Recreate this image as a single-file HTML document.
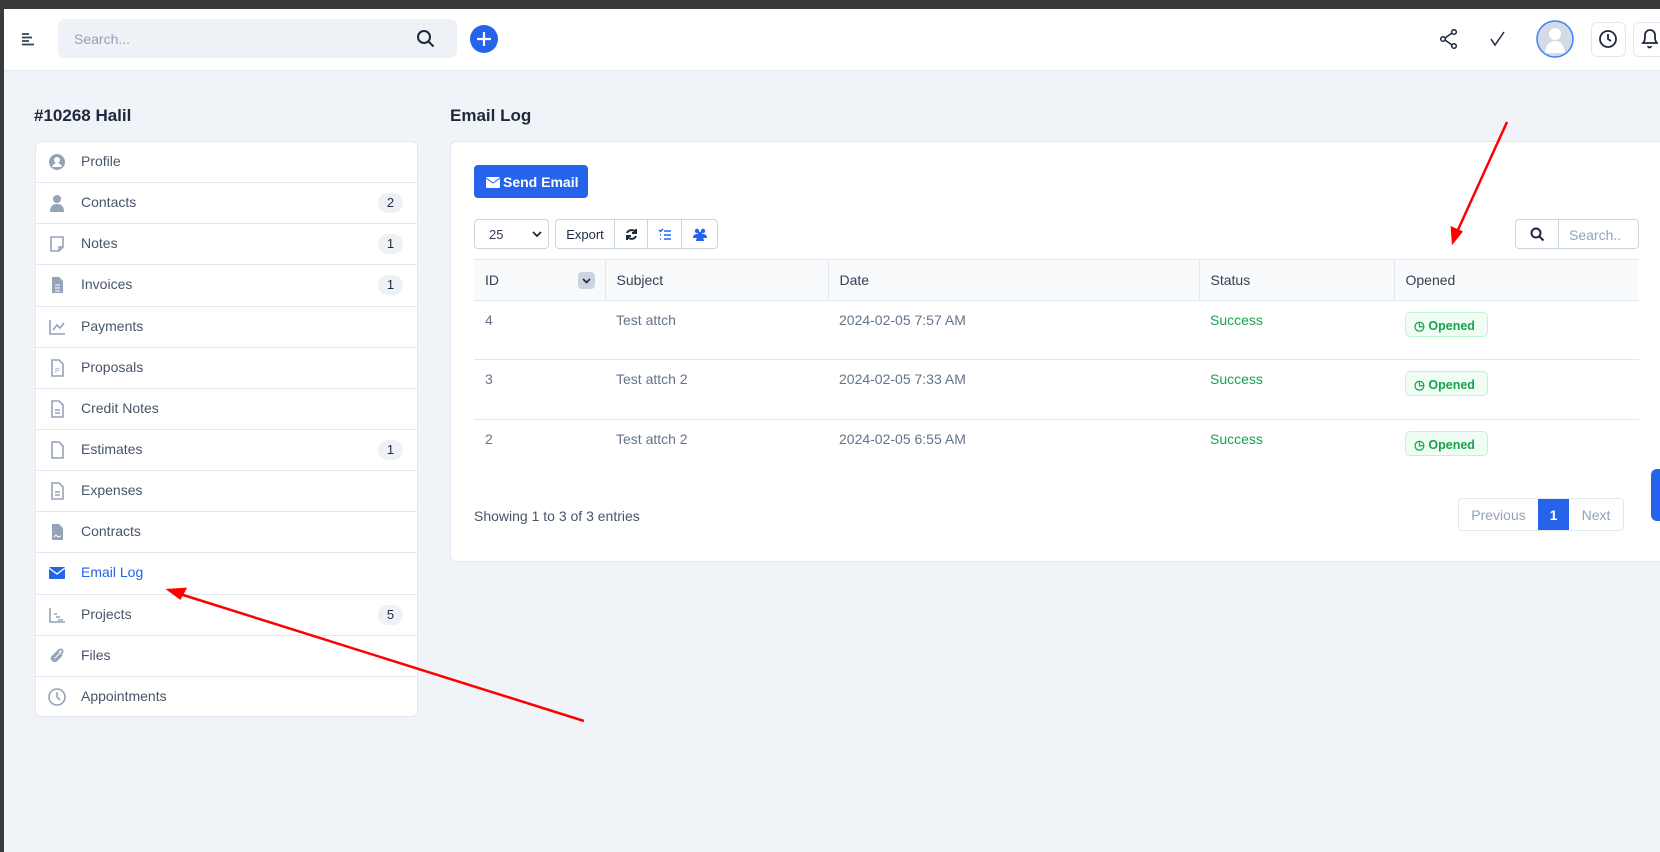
<!DOCTYPE html>
<html><head><meta charset="utf-8"><style>
*{box-sizing:border-box;margin:0;padding:0}
body{width:1660px;height:852px;overflow:hidden;background:#f0f3f8;font-family:"Liberation Sans",Arial,sans-serif;font-size:14px;color:#475569;position:relative}
.abs{position:absolute}
.topbar{left:0;top:0;width:1660px;height:9px;background:#3a3a3a}
.leftbar{left:0;top:0;width:4px;height:852px;background:#3a3a3a}
.header{left:4px;top:9px;width:1656px;height:62px;background:#fff;border-bottom:1px solid #e2e8f0}
.search{left:58px;top:19px;width:399px;height:39px;background:#eef1f6;border-radius:7px;color:#94a3b8;font-size:14px;padding:12px 0 0 16px}
h1{font-size:17px;font-weight:bold;color:#1e293b;position:absolute}
.side{left:35px;top:141px;width:383px;height:576px;background:#fff;border:1px solid #e2e8f0;border-radius:6px;overflow:hidden}
.row{height:41.15px;border-bottom:1px solid #e2e8f0;position:relative;font-size:14px;color:#475569;padding:11px 0 0 45px}
.row:last-child{border-bottom:0}
.row svg{position:absolute;left:12px;top:11px}
.badge{position:absolute;right:14px;top:10px;width:25px;height:20px;border-radius:10px;background:#eef1f6;color:#1e293b;font-size:13px;text-align:center;line-height:20px}
.active{color:#2563eb}
.main{left:450px;top:141px;width:1220px;height:421px;background:#fff;border:1px solid #e2e8f0;border-radius:6px}
.btn{left:474px;top:165px;width:114px;height:33px;background:#2563eb;border-radius:4px;color:#fff;font-weight:bold;font-size:14px;padding:9px 0 0 12px}
.sel{left:474px;top:219px;width:75px;height:30px;border:1px solid #cbd5e1;border-radius:4px;font-size:13px;color:#334155;padding:7px 0 0 14px}
.grp{left:555px;top:219px;height:30px;border:1px solid #cbd5e1;border-radius:4px;display:flex}
.grp div{border-right:1px solid #cbd5e1;height:28px;display:flex;align-items:center;justify-content:center;font-size:13px;color:#1e293b}
.grp div:last-child{border-right:0}
table{position:absolute;left:474px;top:259px;width:1165px;border-collapse:collapse}
th{background:#f8fafc;height:41px;text-align:left;font-weight:normal;color:#334155;font-size:14px;padding-left:11px;border-right:1px solid #e2e8f0;border-top:1px solid #e2e8f0;border-bottom:1px solid #e2e8f0}
th:last-child{border-right:0}
td{height:59.3px;vertical-align:top;padding:11px 0 0 11px;border-bottom:1px solid #e2e8f0;color:#64748b}
tr:last-child td{border-bottom:0}
.ok{color:#16a34a}
.op{display:inline-block;margin-top:0px;height:25px;width:83px;border:1px solid #bbf7d0;background:#f0fdf4;border-radius:5px;color:#16a34a;font-size:12.5px;font-weight:bold;padding:5px 0 0 8px}
.pag{left:1458px;top:498px;height:33px;border:1px solid #e2e8f0;border-radius:4px;display:flex;font-size:14px;color:#94a3b8}
.pag div{display:flex;align-items:center;justify-content:center}
</style></head><body>
<div class="abs header"></div>
<div class="abs topbar"></div>
<div class="abs leftbar"></div>
<svg class="abs" style="left:21px;top:33px" width="14" height="13"><path d="M1 1h7M1 4.5h10M1 8h7M1 11.5h12" stroke="#334155" stroke-width="1.8"/></svg>
<div class="abs search">Search...</div>
<svg class="abs" style="left:416px;top:29px" width="20" height="20" fill="none" stroke="#1e293b" stroke-width="2"><circle cx="8" cy="8" r="6"/><path d="M12.5 12.5l5 5"/></svg>
<svg class="abs" style="left:470px;top:25px" width="28" height="28"><circle cx="14" cy="14" r="14" fill="#2563eb"/><path d="M14 7v14M7 14h14" stroke="#fff" stroke-width="2.2"/></svg>
<svg class="abs" style="left:1439px;top:29px" width="20" height="20" fill="none" stroke="#1e293b" stroke-width="1.5"><circle cx="15" cy="3" r="2.3"/><circle cx="4" cy="10" r="2.3"/><circle cx="15" cy="17" r="2.3"/><path d="M6 9l7-5M6 11l7 5"/></svg>
<svg class="abs" style="left:1489px;top:30px" width="18" height="18" fill="none" stroke="#1e293b" stroke-width="1.5"><path d="M2 9l4 6L15 2"/></svg>
<svg class="abs" style="left:1536px;top:20px" width="38" height="38"><circle cx="19" cy="19" r="18" fill="#d5dbe6" stroke="#3b82f6" stroke-width="1.5"/><circle cx="19" cy="14" r="6" fill="#fff"/><path d="M9 33c1-9 5-12 10-12s9 3 10 12z" fill="#fff"/></svg>
<div class="abs" style="left:1591px;top:22px;width:35px;height:35px;border:1px solid #e2e8f0;border-radius:6px"></div>
<svg class="abs" style="left:1598px;top:29px" width="20" height="20" fill="none" stroke="#1e293b" stroke-width="1.8"><circle cx="10" cy="10" r="8"/><path d="M10 5v5l3 2"/></svg>
<div class="abs" style="left:1633px;top:22px;width:35px;height:35px;border:1px solid #e2e8f0;border-radius:6px"></div>
<svg class="abs" style="left:1640px;top:28px" width="18" height="22" fill="none" stroke="#1e293b" stroke-width="1.8"><path d="M3 15c2-2 2-4 2-8a5 5 0 0110 0c0 4 0 6 2 8zM8 18c0 2 3 2 3 0"/></svg>

<h1 style="left:34px;top:106px">#10268 Halil</h1>
<h1 style="left:450px;top:106px">Email Log</h1>

<div class="abs side">
<div class="row"><svg width="18" height="18"><circle cx="9" cy="9" r="8" fill="#94a3b8"/><circle cx="9" cy="7" r="3" fill="#fff"/><path d="M4 14c1-3 3-4 5-4s4 1 5 4" fill="#fff"/></svg>Profile</div>
<div class="row"><svg width="18" height="18"><circle cx="9" cy="5" r="4" fill="#94a3b8"/><path d="M2 18c0-6 3-8 7-8s7 2 7 8z" fill="#94a3b8"/></svg>Contacts<span class="badge">2</span></div>
<div class="row"><svg width="18" height="18" fill="none" stroke="#94a3b8" stroke-width="1.6"><path d="M3 2h12v10l-4 4H3zM15 12h-4v4"/></svg>Notes<span class="badge">1</span></div>
<div class="row"><svg width="18" height="18"><path d="M4 1h7l4 4v12H4z" fill="#94a3b8"/><path d="M7 9h5M7 12h5M7 15h5" stroke="#fff"/></svg>Invoices<span class="badge">1</span></div>
<div class="row"><svg width="18" height="18" fill="none" stroke="#94a3b8" stroke-width="1.6"><path d="M2 2v14h15M5 12l4-5 3 3 4-5"/></svg>Payments</div>
<div class="row"><svg width="18" height="18" fill="none" stroke="#94a3b8" stroke-width="1.6"><path d="M4 1h7l4 4v12H4z"/><text x="7" y="14" font-size="7" fill="#94a3b8" stroke="none">P</text></svg>Proposals</div>
<div class="row"><svg width="18" height="18" fill="none" stroke="#94a3b8" stroke-width="1.6"><path d="M4 1h7l4 4v12H4zM7 10h5M7 13h5"/></svg>Credit Notes</div>
<div class="row"><svg width="18" height="18" fill="none" stroke="#94a3b8" stroke-width="1.6"><path d="M4 1h7l4 4v12H4z"/></svg>Estimates<span class="badge">1</span></div>
<div class="row"><svg width="18" height="18" fill="none" stroke="#94a3b8" stroke-width="1.6"><path d="M4 1h7l4 4v12H4zM7 10h5M7 13h5"/></svg>Expenses</div>
<div class="row"><svg width="18" height="18"><path d="M4 1h7l4 4v12H4z" fill="#94a3b8"/><path d="M6 14l2-2 2 2 3-1" stroke="#fff" fill="none"/></svg>Contracts</div>
<div class="row active"><svg width="18" height="18"><rect x="1" y="3" width="16" height="12" rx="1" fill="#2563eb"/><path d="M1 4l8 6 8-6" stroke="#fff" stroke-width="1.4" fill="none"/></svg>Email Log</div>
<div class="row"><svg width="18" height="18" fill="none" stroke="#94a3b8" stroke-width="1.6"><path d="M2 2v14h15M6 8h3M8 11h4M10 14h5"/></svg>Projects<span class="badge">5</span></div>
<div class="row"><svg width="18" height="18" fill="none" stroke="#94a3b8" stroke-width="1.8"><path d="M14 8l-6 6a3 3 0 01-4-4l7-7a2 2 0 013 3l-6 6a1 1 0 01-2-2l5-5"/></svg>Files</div>
<div class="row"><svg width="18" height="18" fill="none" stroke="#94a3b8" stroke-width="1.6"><circle cx="9" cy="9" r="8"/><path d="M9 4v5l3 3"/></svg>Appointments</div>
</div>

<div class="abs main"></div>
<div class="abs btn"><svg width="14" height="11" style="vertical-align:-1px;margin-right:3px"><rect width="14" height="11" rx="1" fill="#fff"/><path d="M0 1l7 5 7-5" stroke="#2563eb" fill="none"/></svg>Send Email</div>
<div class="abs sel">25<svg style="position:absolute;right:6px;top:11px" width="10" height="7"><path d="M1 1l4 4 4-4" stroke="#1e293b" stroke-width="1.8" fill="none"/></svg></div>
<div class="abs grp">
<div style="width:59px">Export</div>
<div style="width:33px"><svg width="13" height="13" fill="none" stroke="#1e293b" stroke-width="2"><path d="M11 5A5 5 0 002 5M2 8a5 5 0 009 0M11 1v4H7M2 12V8h4"/></svg></div>
<div style="width:34px"><svg width="14" height="13" fill="none" stroke="#2563eb" stroke-width="1.5"><path d="M1 2l1.5 1.5L5 1M6 3h7M6 7h7M6 11h7M2 7h1M2 11h1"/></svg></div>
<div style="width:35px"><svg width="16" height="13" fill="#2563eb"><circle cx="5" cy="3" r="2.2"/><circle cx="11" cy="3" r="2.2"/><circle cx="8" cy="6" r="2.2"/><path d="M1 10c0-3 2-4 4-4s4 1 4 4zM7 10c0-3 2-4 4-4s4 1 4 4zM4 13c0-3 2-4 4-4s4 1 4 4z"/></svg></div>
</div>
<div class="abs" style="left:1515px;top:219px;width:124px;height:30px;border:1px solid #cbd5e1;border-radius:4px;display:flex">
<div style="width:43px;border-right:1px solid #cbd5e1;display:flex;align-items:center;justify-content:center"><svg width="15" height="15" fill="none" stroke="#1e293b" stroke-width="2"><circle cx="6" cy="6" r="4.5"/><path d="M9.5 9.5l4 4"/></svg></div>
<div style="padding:7px 0 0 10px;color:#94a3b8;font-size:14px">Search..</div>
</div>
<table>
<tr><th style="width:131px;position:relative">ID<span style="position:absolute;right:10px;top:12px;width:17px;height:17px;border-radius:4px;background:#cbd5e1"><svg width="17" height="17"><path d="M5 7l3.5 3.5L12 7" stroke="#1e293b" stroke-width="1.6" fill="none"/></svg></span></th><th style="width:223px">Subject</th><th style="width:371px">Date</th><th style="width:195px">Status</th><th>Opened</th></tr>
<tr><td>4</td><td>Test attch</td><td>2024-02-05 7:57 AM</td><td class="ok">Success</td><td><span class="op">&#9719; Opened</span></td></tr>
<tr><td>3</td><td>Test attch 2</td><td>2024-02-05 7:33 AM</td><td class="ok">Success</td><td><span class="op">&#9719; Opened</span></td></tr>
<tr><td>2</td><td>Test attch 2</td><td>2024-02-05 6:55 AM</td><td class="ok">Success</td><td><span class="op">&#9719; Opened</span></td></tr>
</table>
<div class="abs" style="left:474px;top:508px;color:#475569">Showing 1 to 3 of 3 entries</div>
<div class="abs pag"><div style="width:79px">Previous</div><div style="width:31px;background:#2563eb;color:#fff;font-weight:bold">1</div><div style="width:54px">Next</div></div>
<div class="abs" style="left:1651px;top:469px;width:12px;height:52px;background:#2563eb;border-radius:6px 0 0 6px"></div>
<svg class="abs" style="left:0;top:0" width="1660" height="852"><g stroke="#f00" stroke-width="2.5" fill="#f00"><path d="M584 721L180 594"/><path d="M169 590l16-1-5 9z"/><path d="M1507 122L1457 232"/><path d="M1453 242l-1-14 9 4z"/></g></svg>
</body></html>
